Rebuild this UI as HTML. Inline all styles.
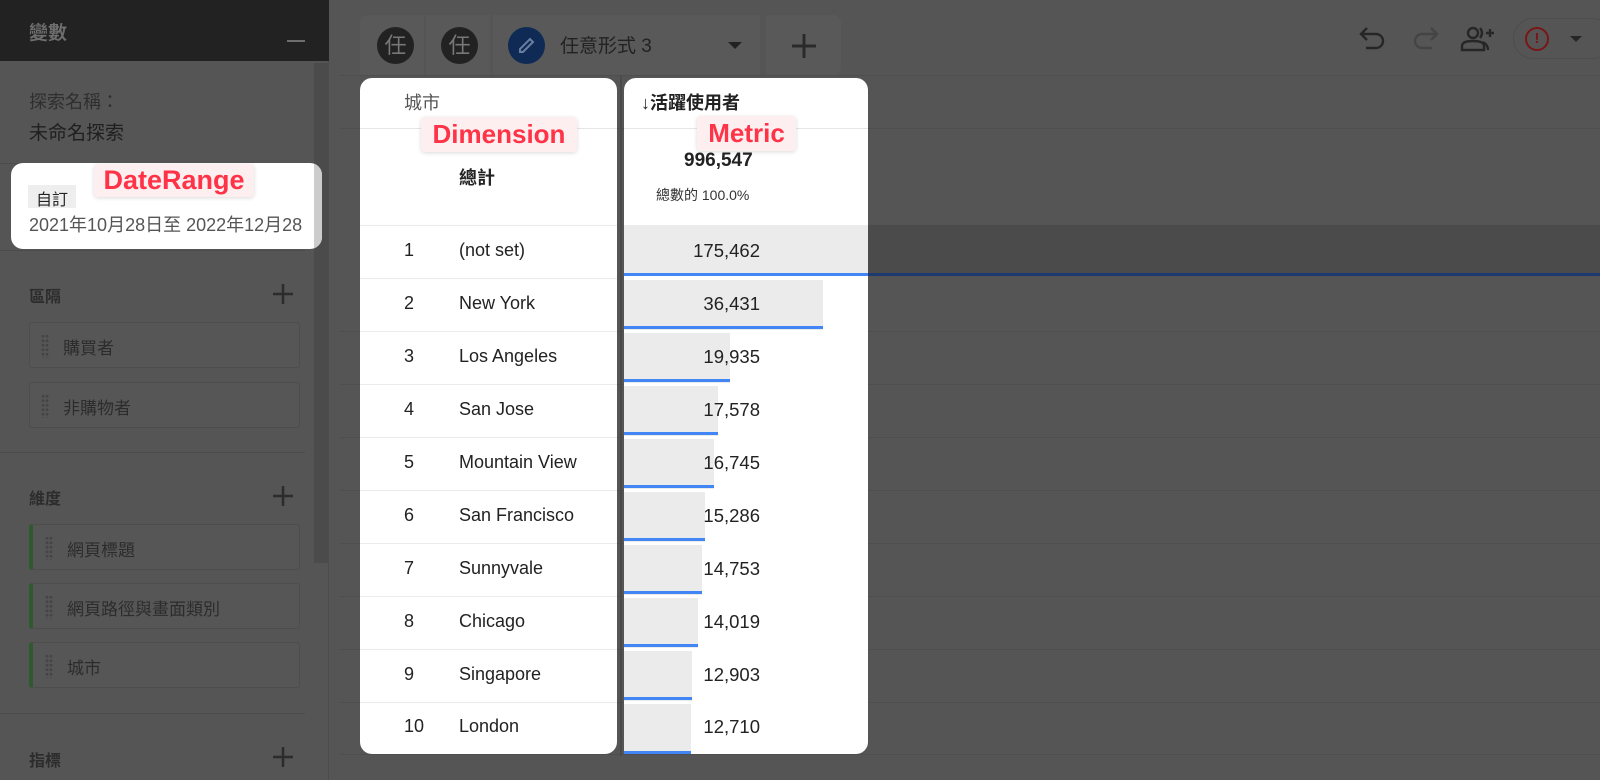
<!DOCTYPE html>
<html><head><meta charset="utf-8"><style>
*{margin:0;padding:0;box-sizing:border-box}
body{width:1600px;height:780px;overflow:hidden;background:#555;font-family:"Liberation Sans","Noto Sans CJK TC",sans-serif;position:relative}
.a{position:absolute;white-space:nowrap}
.sb{left:0;top:0;width:329px;height:780px;background:#555;border-right:1px solid #4c4c4c}
.hl{height:1px;background:#4b4b4b}
.box{left:29px;width:271px;height:46px;border:1px solid #4d4d4d;border-radius:3px;background:#565656}
.box .t{position:absolute;left:33px;top:11px;font-size:17px;color:#2c2c2c}
.grip{position:absolute;left:11px;top:11px;width:8px;height:24px;background:radial-gradient(circle,#454545 1.4px,transparent 1.6px) 0 0/4px 4.5px}
.g{border-left:4px solid #2f5a2f}
.sec{font-size:16px;color:#2c2c2c;font-weight:bold;left:29px}
.card{background:#fff;border-radius:12px}
.lab{color:#ff3347;font-weight:bold;background:#fdeff0;border-radius:4px;box-shadow:0 1px 4px rgba(0,0,0,.15);text-align:center}
.num{font-size:18px;color:#222}
.row{left:360px;width:257px;height:1px;background:#ececec}
.bar{background:#ebebeb;left:624px}
.blu{background:#4285f4;left:624px;height:3px}
.v{font-size:18.5px;color:#222;right:840px;text-align:right}
</style></head><body>
<!-- sidebar -->
<div class="a sb"></div>
<div class="a" style="left:0;top:0;width:329px;height:61px;background:#222"></div>
<div class="a" style="left:29px;top:18px;font-size:19px;color:#6e6e6e;font-weight:bold">變數</div>
<div class="a" style="left:287px;top:40px;width:18px;height:2px;background:#6e6e6e"></div>
<div class="a" style="left:314px;top:63px;width:14px;height:500px;background:#4b4b4b"></div>
<div class="a" style="left:29px;top:88px;font-size:18px;color:#2f2f2f">探索名稱：</div>
<div class="a" style="left:29px;top:118px;font-size:19px;color:#1f1f1f">未命名探索</div>
<div class="a hl" style="left:0;top:163px;width:305px"></div>
<div class="a card" style="left:11px;top:163px;width:311px;height:86px;overflow:hidden"><div class="a" style="left:303px;top:0;width:8px;height:86px;background:#ccc"></div></div>
<div class="a" style="left:28px;top:185px;width:48px;height:23px;background:#eee;font-size:16px;color:#222;padding:1px 0 0 8px">自訂</div>
<div class="a lab" style="left:94px;top:164px;width:160px;height:33px;font-size:27px;line-height:33px">DateRange</div>
<div class="a" style="left:29px;top:211px;font-size:18px;color:#555;width:276px;overflow:hidden">2021年10月28日至 2022年12月28日</div>
<div class="a hl" style="left:0;top:250px;width:305px"></div>
<svg class="a" style="left:272px;top:283px" width="22" height="22"><path d="M11 1V21M1 11H21" stroke="#2c2c2c" stroke-width="2.5"/></svg>
<div class="a sec" style="top:283px">區隔</div>
<div class="a box" style="top:322px"><div class="grip"></div><div class="t">購買者</div></div>
<div class="a box" style="top:382px"><div class="grip"></div><div class="t">非購物者</div></div>
<div class="a hl" style="left:0;top:452px;width:305px"></div>
<div class="a sec" style="top:485px">維度</div>
<svg class="a" style="left:272px;top:485px" width="22" height="22"><path d="M11 1V21M1 11H21" stroke="#2c2c2c" stroke-width="2.5"/></svg>
<div class="a box g" style="top:524px"><div class="grip" style="left:12px"></div><div class="t" style="left:34px">網頁標題</div></div>
<div class="a box g" style="top:583px"><div class="grip" style="left:12px"></div><div class="t" style="left:34px">網頁路徑與畫面類別</div></div>
<div class="a box g" style="top:642px"><div class="grip" style="left:12px"></div><div class="t" style="left:34px">城市</div></div>
<div class="a hl" style="left:0;top:713px;width:305px"></div>
<div class="a sec" style="top:747px">指標</div>
<svg class="a" style="left:272px;top:746px" width="22" height="22"><path d="M11 1V21M1 11H21" stroke="#2c2c2c" stroke-width="2.5"/></svg>

<!-- toolbar -->
<div class="a" style="left:360px;top:15px;width:64px;height:61px;background:#595959;border-radius:8px 0 0 0"></div>
<div class="a" style="left:426px;top:15px;width:64px;height:61px;background:#595959"></div>
<div class="a" style="left:493px;top:15px;width:267px;height:61px;background:#595959"></div>
<div class="a" style="left:766px;top:15px;width:75px;height:61px;background:#595959;border-radius:0 8px 8px 0"></div>
<div class="a" style="left:377px;top:27px;width:37px;height:37px;border-radius:50%;background:#222;color:#777;font-size:22px;text-align:center;line-height:37px">任</div>
<div class="a" style="left:441px;top:27px;width:37px;height:37px;border-radius:50%;background:#222;color:#777;font-size:22px;text-align:center;line-height:37px">任</div>
<div class="a" style="left:508px;top:27px;width:37px;height:37px;border-radius:50%;background:#0e2a55">
<svg width="37" height="37" viewBox="0 0 37 37"><path d="M12 25 L12 22 L22 12 L25 15 L15 25 Z" fill="none" stroke="#6a7f9f" stroke-width="2"/></svg></div>
<div class="a" style="left:560px;top:31px;font-size:19px;color:#222">任意形式 3</div>
<div class="a" style="left:728px;top:42px;width:0;height:0;border-left:7px solid transparent;border-right:7px solid transparent;border-top:7px solid #222"></div>
<svg class="a" style="left:791px;top:33px" width="26" height="26"><path d="M13 1V25M1 13H25" stroke="#2a2a2a" stroke-width="3"/></svg>
<div class="a" style="left:340px;top:75px;width:1260px;height:1px;background:#4e4e4e"></div>
<div class="a" style="left:340px;top:128px;width:1260px;height:1px;background:#4e4e4e"></div>
<svg class="a" style="left:1356px;top:24px" width="32" height="28" viewBox="0 0 32 28"><path d="M6 10 H20 A7 7 0 0 1 20 24 H10 M11 4 L5 10 L11 16" fill="none" stroke="#262626" stroke-width="2.4"/></svg>
<svg class="a" style="left:1410px;top:24px" width="32" height="28" viewBox="0 0 32 28"><path d="M26 10 H12 A7 7 0 0 0 12 24 H22 M21 4 L27 10 L21 16" fill="none" stroke="#444" stroke-width="2.4"/></svg>
<svg class="a" style="left:1460px;top:24px" width="38" height="28" viewBox="0 0 38 28"><circle cx="13" cy="9" r="5" fill="none" stroke="#262626" stroke-width="2.4"/><path d="M2 26 V22 Q2 17 13 17 Q24 17 24 22 V26 Z M20 4 Q24 9 20 14 M23 18 Q28 21 28 26" fill="none" stroke="#262626" stroke-width="2.4"/><path d="M30 5 V13 M26 9 H34" stroke="#262626" stroke-width="2.4"/></svg>
<div class="a" style="left:1513px;top:18px;width:100px;height:41px;border:1px solid #4d4d4d;border-radius:20px"></div>
<div class="a" style="left:1525px;top:27px;width:24px;height:24px;border:2.5px solid #7a1616;border-radius:50%;color:#7a1616;font-weight:bold;font-size:15px;text-align:center;line-height:19px">!</div>
<div class="a" style="left:1570px;top:36px;width:0;height:0;border-left:6px solid transparent;border-right:6px solid transparent;border-top:6px solid #262626"></div>

<!-- grid in main area -->
<div class="a" style="left:868px;top:225px;width:732px;height:49px;background:#4b4b4b"></div>
<div class="a" style="left:624px;top:273px;width:976px;height:3px;background:#1d3a6e"></div>
<div class="a" style="left:340px;top:331px;width:1260px;height:1px;background:#4e4e4e"></div>
<div class="a" style="left:340px;top:384px;width:1260px;height:1px;background:#4e4e4e"></div>
<div class="a" style="left:340px;top:437px;width:1260px;height:1px;background:#4e4e4e"></div>
<div class="a" style="left:340px;top:490px;width:1260px;height:1px;background:#4e4e4e"></div>
<div class="a" style="left:340px;top:543px;width:1260px;height:1px;background:#4e4e4e"></div>
<div class="a" style="left:340px;top:596px;width:1260px;height:1px;background:#4e4e4e"></div>
<div class="a" style="left:340px;top:649px;width:1260px;height:1px;background:#4e4e4e"></div>
<div class="a" style="left:340px;top:702px;width:1260px;height:1px;background:#4e4e4e"></div>
<div class="a" style="left:340px;top:754px;width:1260px;height:1px;background:#4e4e4e"></div>
<div class="a" style="left:620px;top:76px;width:2px;height:680px;background:#4a4a4a"></div>

<!-- dimension card -->
<div class="a card" style="left:360px;top:78px;width:257px;height:676px"></div>
<div class="a" style="left:404px;top:89px;font-size:18px;color:#555">城市</div>
<div class="a" style="left:360px;top:128px;width:257px;height:1px;background:#e6e6e6"></div>
<div class="a lab" style="left:421px;top:117px;width:156px;height:35px;font-size:26px;line-height:35px">Dimension</div>
<div class="a" style="left:459px;top:164px;font-size:18px;color:#222;font-weight:bold">總計</div>
<div class="a row" style="top:225px"></div><div class="a row" style="top:278px"></div><div class="a row" style="top:331px"></div><div class="a row" style="top:384px"></div><div class="a row" style="top:437px"></div><div class="a row" style="top:490px"></div><div class="a row" style="top:543px"></div><div class="a row" style="top:596px"></div><div class="a row" style="top:649px"></div><div class="a row" style="top:702px"></div>
<div class="a num" style="left:404px;top:240px">1</div><div class="a num" style="left:459px;top:240px">(not set)</div>
<div class="a num" style="left:404px;top:293px">2</div><div class="a num" style="left:459px;top:293px">New York</div>
<div class="a num" style="left:404px;top:346px">3</div><div class="a num" style="left:459px;top:346px">Los Angeles</div>
<div class="a num" style="left:404px;top:399px">4</div><div class="a num" style="left:459px;top:399px">San Jose</div>
<div class="a num" style="left:404px;top:452px">5</div><div class="a num" style="left:459px;top:452px">Mountain View</div>
<div class="a num" style="left:404px;top:505px">6</div><div class="a num" style="left:459px;top:505px">San Francisco</div>
<div class="a num" style="left:404px;top:558px">7</div><div class="a num" style="left:459px;top:558px">Sunnyvale</div>
<div class="a num" style="left:404px;top:611px">8</div><div class="a num" style="left:459px;top:611px">Chicago</div>
<div class="a num" style="left:404px;top:664px">9</div><div class="a num" style="left:459px;top:664px">Singapore</div>
<div class="a num" style="left:404px;top:716px">10</div><div class="a num" style="left:459px;top:716px">London</div>

<!-- metric card -->
<div class="a card" style="left:624px;top:78px;width:244px;height:676px;overflow:hidden">
<div class="a" style="left:0;top:147px;width:244px;height:49px;background:#ebebeb"></div>
</div>
<div class="a" style="left:641px;top:89px;font-size:18px;color:#222;font-weight:bold">↓活躍使用者</div>
<div class="a" style="left:624px;top:128px;width:244px;height:1px;background:#e6e6e6"></div>
<div class="a lab" style="left:697px;top:116px;width:99px;height:35px;font-size:26px;line-height:35px">Metric</div>
<div class="a" style="left:684px;top:150px;font-size:19px;color:#222;font-weight:bold">996,547</div>
<div class="a" style="left:656px;top:185px;font-size:14px;color:#333">總數的 100.0%</div>
<div class="a" style="left:624px;top:225px;width:244px;height:1px;background:#ececec"></div>
<div class="a bar" style="top:280px;width:199px;height:50px"></div>
<div class="a bar" style="top:333px;width:106px;height:50px"></div>
<div class="a bar" style="top:386px;width:94px;height:50px"></div>
<div class="a bar" style="top:439px;width:90px;height:50px"></div>
<div class="a bar" style="top:492px;width:81px;height:50px"></div>
<div class="a bar" style="top:545px;width:78px;height:50px"></div>
<div class="a bar" style="top:598px;width:74px;height:50px"></div>
<div class="a bar" style="top:651px;width:68px;height:50px"></div>
<div class="a bar" style="top:704px;width:67px;height:49px"></div>
<div class="a blu" style="top:273px;width:244px"></div>
<div class="a blu" style="top:326px;width:199px"></div>
<div class="a blu" style="top:379px;width:106px"></div>
<div class="a blu" style="top:432px;width:94px"></div>
<div class="a blu" style="top:485px;width:90px"></div>
<div class="a blu" style="top:538px;width:81px"></div>
<div class="a blu" style="top:591px;width:78px"></div>
<div class="a blu" style="top:644px;width:74px"></div>
<div class="a blu" style="top:697px;width:68px"></div>
<div class="a blu" style="top:751px;width:67px"></div>
<div class="a v" style="top:240px">175,462</div>
<div class="a v" style="top:293px">36,431</div>
<div class="a v" style="top:346px">19,935</div>
<div class="a v" style="top:399px">17,578</div>
<div class="a v" style="top:452px">16,745</div>
<div class="a v" style="top:505px">15,286</div>
<div class="a v" style="top:558px">14,753</div>
<div class="a v" style="top:611px">14,019</div>
<div class="a v" style="top:664px">12,903</div>
<div class="a v" style="top:716px">12,710</div>
</body></html>
